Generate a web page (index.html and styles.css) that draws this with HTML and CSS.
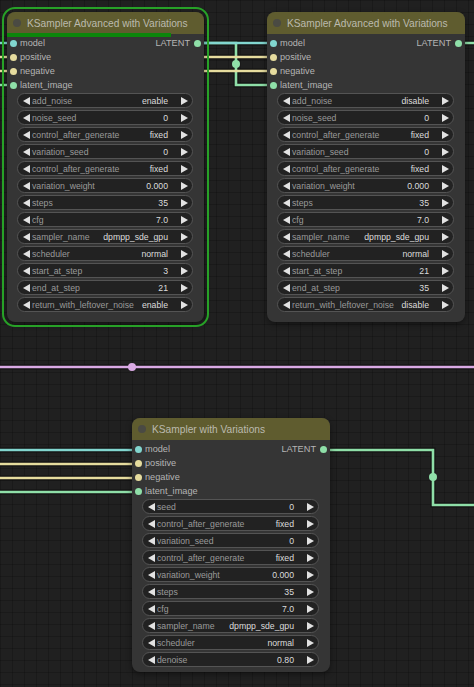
FILE: index.html
```html
<!DOCTYPE html>
<html lang="en">
<head>
    <meta charset="utf-8">
    <title>KSampler Variations</title>
    <link rel="stylesheet" href="styles.css">
</head>
<body>
<div class="canvas">
    <svg class="wires" width="474" height="687" viewBox="0 0 474 687">
        <g class="wire-shadow">
            <path d="M0 43 H274 M0 57 H274 M0 71 H274 M0 85 H13 M197 43 H236 V85 H274 M459 43 H474"/>
            <path d="M0 367 H474"/>
            <path d="M0 450 H138 M0 464 H138 M0 478 H138 M0 492 H138 M322 450 H433 V505 H474"/>
        </g>
        <g class="wire">
            <path class="w-latent" d="M0 85 H13 M197 43 H236 V85 H274 M459 43 H474 M0 492 H138 M322 450 H433 V505 H474"/>
            <path class="w-model" d="M0 43 H274 M0 450 H138"/>
            <path class="w-cond" d="M0 57 H274 M0 71 H274 M0 464 H138 M0 478 H138"/>
            <path class="w-image" d="M0 367 H474"/>
        </g>
        <circle class="dot-latent" cx="236" cy="64" r="4"/>
        <circle class="dot-image" cx="132" cy="367" r="4"/>
        <circle class="dot-latent" cx="433" cy="477" r="4"/>
    </svg>

    <!-- advanced sampler, running -->
    <div class="node node-a running">
        <div class="node-title"><span class="title-dot"></span>KSampler Advanced with Variations<span class="progress"></span></div>
        <div class="slots">
            <div class="slot-row"><span class="in"><i class="slot model"></i>model</span><span class="out">LATENT<i class="slot latent"></i></span></div>
            <div class="slot-row"><span class="in"><i class="slot cond"></i>positive</span></div>
            <div class="slot-row"><span class="in"><i class="slot cond"></i>negative</span></div>
            <div class="slot-row"><span class="in"><i class="slot latent"></i>latent_image</span></div>
        </div>
        <div class="widgets">
            <div class="widget"><span class="arr-l"></span><span class="label">add_noise</span><span class="value">enable</span><span class="arr-r"></span></div>
            <div class="widget"><span class="arr-l"></span><span class="label">noise_seed</span><span class="value">0</span><span class="arr-r"></span></div>
            <div class="widget"><span class="arr-l"></span><span class="label">control_after_generate</span><span class="value">fixed</span><span class="arr-r"></span></div>
            <div class="widget"><span class="arr-l"></span><span class="label">variation_seed</span><span class="value">0</span><span class="arr-r"></span></div>
            <div class="widget"><span class="arr-l"></span><span class="label">control_after_generate</span><span class="value">fixed</span><span class="arr-r"></span></div>
            <div class="widget"><span class="arr-l"></span><span class="label">variation_weight</span><span class="value">0.000</span><span class="arr-r"></span></div>
            <div class="widget"><span class="arr-l"></span><span class="label">steps</span><span class="value">35</span><span class="arr-r"></span></div>
            <div class="widget"><span class="arr-l"></span><span class="label">cfg</span><span class="value">7.0</span><span class="arr-r"></span></div>
            <div class="widget"><span class="arr-l"></span><span class="label">sampler_name</span><span class="value">dpmpp_sde_gpu</span><span class="arr-r"></span></div>
            <div class="widget"><span class="arr-l"></span><span class="label">scheduler</span><span class="value">normal</span><span class="arr-r"></span></div>
            <div class="widget"><span class="arr-l"></span><span class="label">start_at_step</span><span class="value">3</span><span class="arr-r"></span></div>
            <div class="widget"><span class="arr-l"></span><span class="label">end_at_step</span><span class="value">21</span><span class="arr-r"></span></div>
            <div class="widget"><span class="arr-l"></span><span class="label">return_with_leftover_noise</span><span class="value">enable</span><span class="arr-r"></span></div>
        </div>
    </div>

    <div class="node node-b">
        <div class="node-title"><span class="title-dot"></span>KSampler Advanced with Variations</div>
        <div class="slots">
            <div class="slot-row"><span class="in"><i class="slot model"></i>model</span><span class="out">LATENT<i class="slot latent"></i></span></div>
            <div class="slot-row"><span class="in"><i class="slot cond"></i>positive</span></div>
            <div class="slot-row"><span class="in"><i class="slot cond"></i>negative</span></div>
            <div class="slot-row"><span class="in"><i class="slot latent"></i>latent_image</span></div>
        </div>
        <div class="widgets">
            <div class="widget"><span class="arr-l"></span><span class="label">add_noise</span><span class="value">disable</span><span class="arr-r"></span></div>
            <div class="widget"><span class="arr-l"></span><span class="label">noise_seed</span><span class="value">0</span><span class="arr-r"></span></div>
            <div class="widget"><span class="arr-l"></span><span class="label">control_after_generate</span><span class="value">fixed</span><span class="arr-r"></span></div>
            <div class="widget"><span class="arr-l"></span><span class="label">variation_seed</span><span class="value">0</span><span class="arr-r"></span></div>
            <div class="widget"><span class="arr-l"></span><span class="label">control_after_generate</span><span class="value">fixed</span><span class="arr-r"></span></div>
            <div class="widget"><span class="arr-l"></span><span class="label">variation_weight</span><span class="value">0.000</span><span class="arr-r"></span></div>
            <div class="widget"><span class="arr-l"></span><span class="label">steps</span><span class="value">35</span><span class="arr-r"></span></div>
            <div class="widget"><span class="arr-l"></span><span class="label">cfg</span><span class="value">7.0</span><span class="arr-r"></span></div>
            <div class="widget"><span class="arr-l"></span><span class="label">sampler_name</span><span class="value">dpmpp_sde_gpu</span><span class="arr-r"></span></div>
            <div class="widget"><span class="arr-l"></span><span class="label">scheduler</span><span class="value">normal</span><span class="arr-r"></span></div>
            <div class="widget"><span class="arr-l"></span><span class="label">start_at_step</span><span class="value">21</span><span class="arr-r"></span></div>
            <div class="widget"><span class="arr-l"></span><span class="label">end_at_step</span><span class="value">35</span><span class="arr-r"></span></div>
            <div class="widget"><span class="arr-l"></span><span class="label">return_with_leftover_noise</span><span class="value">disable</span><span class="arr-r"></span></div>
        </div>
    </div>

    <div class="node node-c">
        <div class="node-title"><span class="title-dot"></span>KSampler with Variations</div>
        <div class="slots">
            <div class="slot-row"><span class="in"><i class="slot model"></i>model</span><span class="out">LATENT<i class="slot latent"></i></span></div>
            <div class="slot-row"><span class="in"><i class="slot cond"></i>positive</span></div>
            <div class="slot-row"><span class="in"><i class="slot cond"></i>negative</span></div>
            <div class="slot-row"><span class="in"><i class="slot latent"></i>latent_image</span></div>
        </div>
        <div class="widgets">
            <div class="widget"><span class="arr-l"></span><span class="label">seed</span><span class="value">0</span><span class="arr-r"></span></div>
            <div class="widget"><span class="arr-l"></span><span class="label">control_after_generate</span><span class="value">fixed</span><span class="arr-r"></span></div>
            <div class="widget"><span class="arr-l"></span><span class="label">variation_seed</span><span class="value">0</span><span class="arr-r"></span></div>
            <div class="widget"><span class="arr-l"></span><span class="label">control_after_generate</span><span class="value">fixed</span><span class="arr-r"></span></div>
            <div class="widget"><span class="arr-l"></span><span class="label">variation_weight</span><span class="value">0.000</span><span class="arr-r"></span></div>
            <div class="widget"><span class="arr-l"></span><span class="label">steps</span><span class="value">35</span><span class="arr-r"></span></div>
            <div class="widget"><span class="arr-l"></span><span class="label">cfg</span><span class="value">7.0</span><span class="arr-r"></span></div>
            <div class="widget"><span class="arr-l"></span><span class="label">sampler_name</span><span class="value">dpmpp_sde_gpu</span><span class="arr-r"></span></div>
            <div class="widget"><span class="arr-l"></span><span class="label">scheduler</span><span class="value">normal</span><span class="arr-r"></span></div>
            <div class="widget"><span class="arr-l"></span><span class="label">denoise</span><span class="value">0.80</span><span class="arr-r"></span></div>
        </div>
    </div>
</div>
</body>
</html>
```

FILE: styles.css
```css
* {
    box-sizing: border-box;
    margin: 0;
    padding: 0;
}
body {
    background-color: #1e1e1e;
    font-family: "Liberation Sans", Arial, sans-serif;
    overflow: hidden;
}
.canvas {
    position: relative;
    width: 474px;
    height: 687px;
    overflow: hidden;
    background-color: #202020;
    background-image:
        linear-gradient(rgba(0, 0, 0, 0.18) 1px, transparent 1px),
        linear-gradient(90deg, rgba(0, 0, 0, 0.18) 1px, transparent 1px);
    background-size: 12px 12px;
}
.wires {
    position: absolute;
    top: 0;
    left: 0;
    z-index: 0;
}
.wire-shadow path {
    fill: none;
    stroke: #101010;
    stroke-width: 5;
}
.wire path {
    fill: none;
    stroke-width: 2.6;
}
.w-model { stroke: #82d6cf; }
.w-cond { stroke: #e6dc9e; }
.w-latent { stroke: #8fdfa8; }
.w-image { stroke: #d9a9e4; }
.dot-latent { fill: #8fdfa8; }
.dot-image { fill: #d9a9e4; }

/* nodes */
.node {
    position: absolute;
    z-index: 1;
    width: 198px;
    background-color: #353535;
    border-radius: 8px;
    padding-bottom: 10px;
    box-shadow: 0 2px 6px rgba(0, 0, 0, 0.45);
}
.node-a { left: 7px; top: 12px; width: 197px; }
.node-b { left: 267px; top: 12px; padding-bottom: 10px; }
.node-c { left: 132px; top: 418px; padding-bottom: 5px; }
.running {
    outline: 2px solid #27a127;
    outline-offset: 3px;
}
.node-title {
    position: relative;
    height: 22px;
    display: flex;
    align-items: center;
    padding-left: 20px;
    background-color: #5f5c2f;
    border-radius: 8px 8px 0 0;
    color: #bbbaae;
    font-size: 10.2px;
}
.title-dot {
    position: absolute;
    left: 6px;
    top: 7px;
    width: 8px;
    height: 8px;
    border-radius: 50%;
    background-color: #4a4a43;
}
.progress {
    position: absolute;
    left: 0;
    bottom: -3px;
    width: 164px;
    height: 4px;
    background-color: #0b860b;
}
.slots {
    padding-top: 2px;
}
.slot-row {
    height: 14px;
    display: flex;
    justify-content: space-between;
    align-items: center;
    padding: 0 3px 0 3px;
    font-size: 9.2px;
    color: #b4b4b4;
}
.in, .out {
    display: flex;
    align-items: center;
    gap: 3px;
}
.out { gap: 4px; }
.slot {
    display: block;
    width: 7px;
    height: 7px;
    border-radius: 50%;
}
.slot.model { background-color: #82d6cf; }
.slot.cond { background-color: #e6dc9e; }
.slot.latent { background-color: #8fdfa8; }

/* widgets */
.widgets {
    display: flex;
    flex-direction: column;
    gap: 2px;
    margin-top: 1px;
    padding: 0 11px 0 10px;
}
.widget {
    height: 15px;
    display: flex;
    align-items: center;
    padding: 0 4px 0 5px;
    background-color: #222222;
    border: 1px solid #545454;
    border-radius: 8px;
    font-size: 8.7px;
}
.arr-l, .arr-r {
    width: 0;
    height: 0;
    border-top: 4px solid transparent;
    border-bottom: 4px solid transparent;
}
.arr-l {
    border-right: 7px solid #e2e2e2;
    margin-right: 2px;
}
.arr-r {
    border-left: 7px solid #e2e2e2;
    margin-left: 13px;
}
.label {
    flex: 1;
    color: #9a9a9a;
    white-space: nowrap;
}
.value {
    color: #dcdcdc;
    white-space: nowrap;
}
```
